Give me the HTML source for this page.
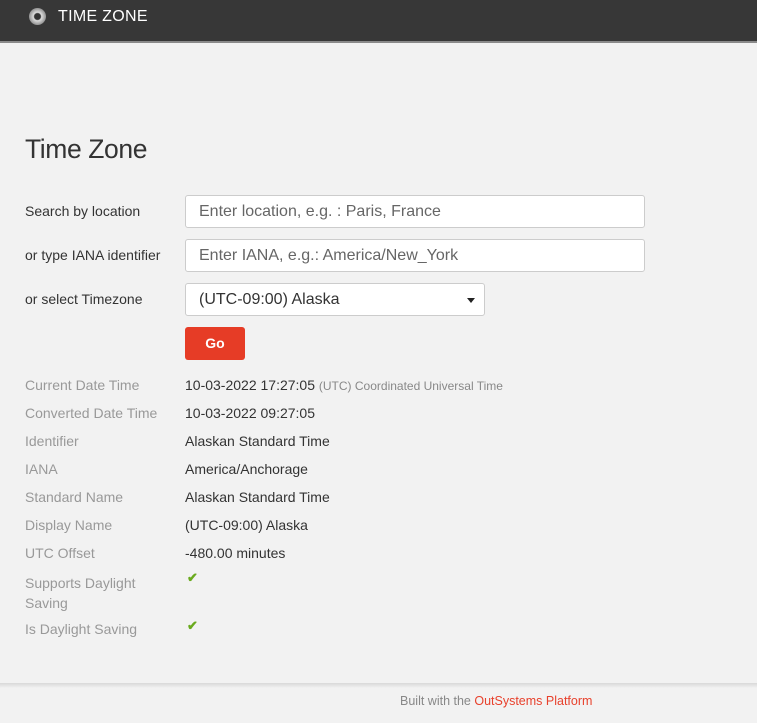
<!DOCTYPE html>
<html><head><meta charset="utf-8"><style>
*{box-sizing:border-box;margin:0;padding:0}
body{width:757px;height:723px;background:#f2f2f2;font-family:"Liberation Sans",sans-serif;position:relative;overflow:hidden}
.hdr{position:absolute;left:0;top:0;width:757px;height:43px;background:#373737;border-bottom:2px solid #8a8a8a}
.logo{position:absolute;left:29px;top:8px;width:17px;height:17px;border-radius:50%;background:radial-gradient(circle at 50% 50%,#333 0 3px,#ddd 4px,#999 8px)}
.ttl{position:absolute;left:58px;top:8px;color:#fff;font-size:16px;letter-spacing:0.3px}
.a{position:absolute;white-space:nowrap}
h1{position:absolute;left:25px;top:134px;font-weight:normal;font-size:26.5px;color:#333;letter-spacing:-0.4px}
.lbl{font-size:14px;color:#333}
.in{position:absolute;background:#fff;border:1px solid #ccc;border-radius:3px;font-size:16px;color:#666;padding:7px 13px;white-space:nowrap}
.go{position:absolute;left:185px;top:327px;width:60px;height:33px;background:#e63c26;border-radius:3px;color:#fff;font-size:14px;font-weight:bold;text-align:center;line-height:33px}
.k{font-size:14px;color:#999}
.v{font-size:14px;color:#333}
.ck{color:#6aaa1e;font-size:13px;font-weight:bold}
.ft{position:absolute;left:0;top:683px;width:757px;height:40px;background:linear-gradient(#d8d8d8,#f2f2f2 5px)}
</style></head><body>
<div class="hdr"><div class="logo"></div><div class="ttl">TIME ZONE</div></div>
<h1>Time Zone</h1>
<div class="a lbl" style="left:25px;top:203px">Search by location</div>
<div class="in" style="left:185px;top:195px;width:460px;height:33px">Enter location, e.g. : Paris, France</div>
<div class="a lbl" style="left:25px;top:247px">or type IANA identifier</div>
<div class="in" style="left:185px;top:239px;width:460px;height:33px">Enter IANA, e.g.: America/New_York</div>
<div class="a lbl" style="left:25px;top:291px">or select Timezone</div>
<div class="in" style="left:185px;top:283px;width:300px;height:33px;color:#333">(UTC-09:00) Alaska<span style="position:absolute;right:9px;top:14px;width:0;height:0;border-left:4px solid transparent;border-right:4px solid transparent;border-top:5px solid #222"></span></div>
<div class="go">Go</div>
<div class="a k" style="left:25px;top:377px">Current Date Time</div>
<div class="a v" style="left:185px;top:377px">10-03-2022 17:27:05 <span style="color:#888;font-size:12px">(UTC) Coordinated Universal Time</span></div>
<div class="a k" style="left:25px;top:405px">Converted Date Time</div>
<div class="a v" style="left:185px;top:405px">10-03-2022 09:27:05</div>
<div class="a k" style="left:25px;top:433px">Identifier</div>
<div class="a v" style="left:185px;top:433px">Alaskan Standard Time</div>
<div class="a k" style="left:25px;top:461px">IANA</div>
<div class="a v" style="left:185px;top:461px">America/Anchorage</div>
<div class="a k" style="left:25px;top:489px">Standard Name</div>
<div class="a v" style="left:185px;top:489px">Alaskan Standard Time</div>
<div class="a k" style="left:25px;top:517px">Display Name</div>
<div class="a v" style="left:185px;top:517px">(UTC-09:00) Alaska</div>
<div class="a k" style="left:25px;top:545px">UTC Offset</div>
<div class="a v" style="left:185px;top:545px">-480.00 minutes</div>
<div class="a k" style="left:25px;top:573px;line-height:20px">Supports Daylight<br>Saving</div>
<div class="a ck" style="left:187px;top:570px">✔</div>
<div class="a k" style="left:25px;top:621px">Is Daylight Saving</div>
<div class="a ck" style="left:187px;top:618px">✔</div>
<div class="ft"></div>
<div class="a" style="left:400px;top:694px;font-size:12.5px;color:#888">Built with the <span style="color:#e8412c">OutSystems Platform</span></div>
</body></html>
